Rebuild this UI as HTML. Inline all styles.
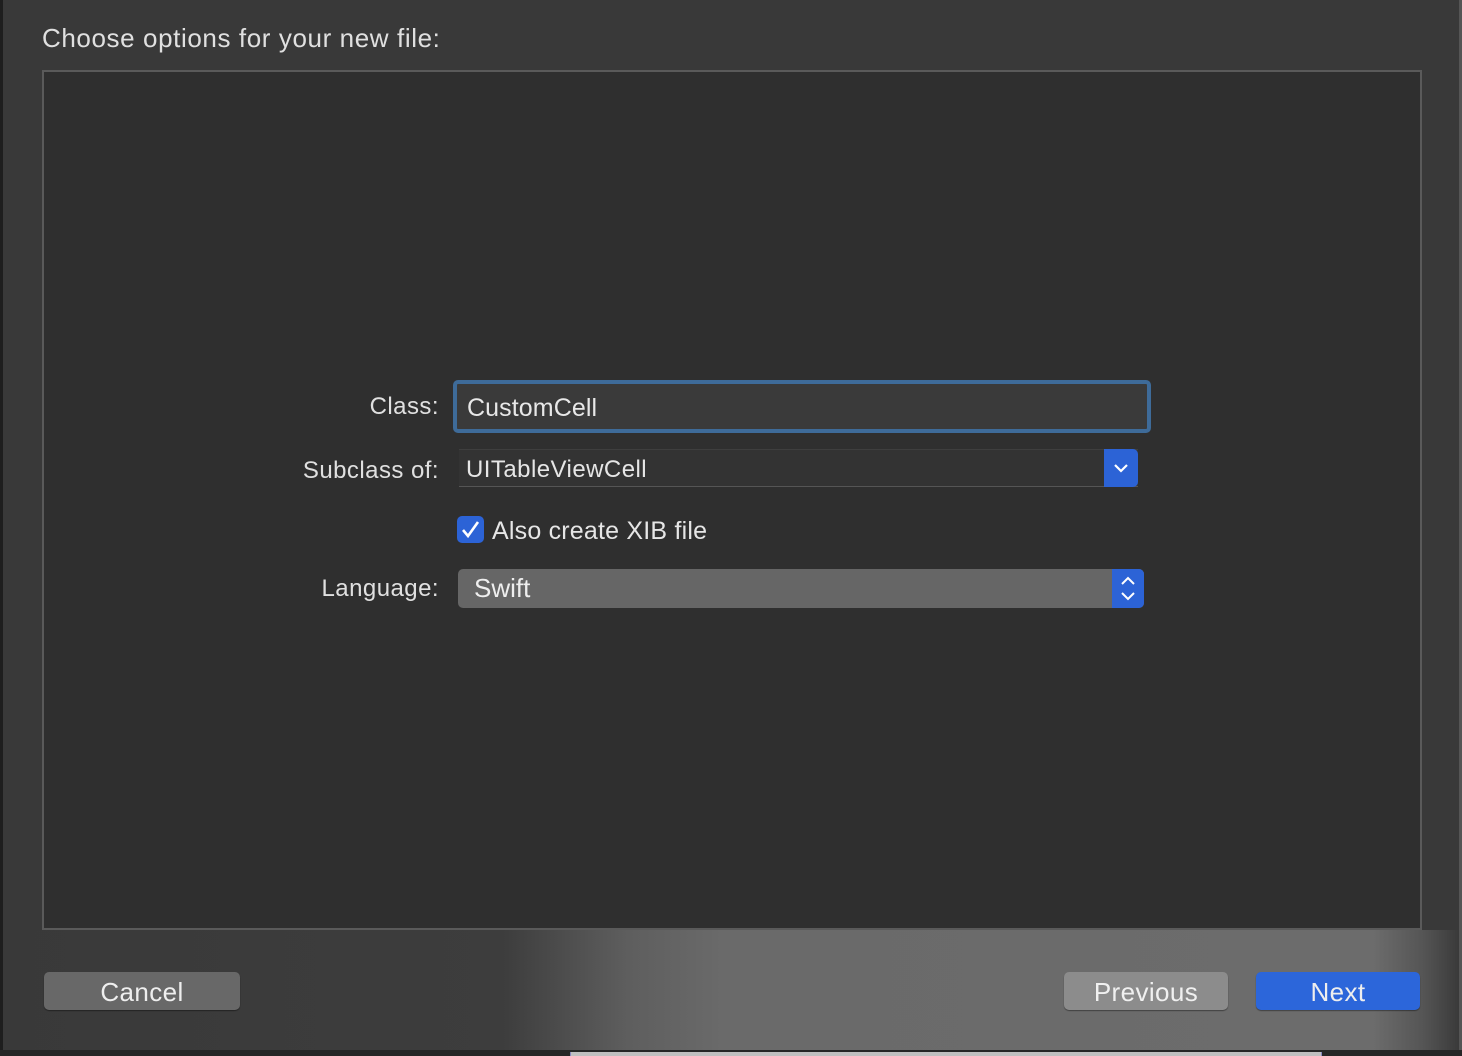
<!DOCTYPE html>
<html><head><meta charset="utf-8"><style>
*{margin:0;padding:0;box-sizing:border-box}
body{width:1462px;height:1056px;background:#222;position:relative;overflow:hidden;font-family:"Liberation Sans",sans-serif;color:#e6e6e6}
.dlg{position:absolute;left:3px;top:0;width:1456px;height:1050px;background:#393939}
.grad{position:absolute;left:3px;top:930px;width:1456px;height:120px;background:linear-gradient(90deg,#393939 0px,#3d3d3d 500px,#5e5e5e 625px,#6a6a6a 720px,#6c6c6c 1370px,#555 1420px,#3a3a3a 1456px)}
.rl{position:absolute;left:1459px;top:0;width:3px;height:1052px;background:#555}
.ll{position:absolute;left:0;top:0;width:3px;height:1052px;background:#1e1e1e}
.bot{position:absolute;left:0;top:1050px;width:1462px;height:6px;background:#262626}
.bot2{position:absolute;left:570px;top:1052px;width:752px;height:4px;background:#c0c0c0;border-left:1px solid #8888c0;border-right:1px solid #8888c0}
.title{position:absolute;left:42px;top:23px;font-size:26px;letter-spacing:0.6px;color:#e0e0e0}
.panel{position:absolute;left:42px;top:70px;width:1380px;height:860px;background:#2f2f2f;border:2px solid #5a5a5a}
.lab{position:absolute;right:1023px;font-size:24px;letter-spacing:0.45px;color:#e0e0e0;text-align:right;white-space:nowrap}
.inp{position:absolute;left:453px;top:380px;width:698px;height:53px;border:4px solid #3e6b99;border-radius:5px;background:#3a3a3a}
.inp span{position:absolute;left:10px;top:10px;font-size:25px;letter-spacing:0.1px;color:#e8e8e8}
.pop{position:absolute;left:459px;top:449px;width:679px;height:38px;background:#333;border-top:1px solid #3e3e3e;border-bottom:1px solid #555}
.pop span{position:absolute;left:7px;top:6px;font-size:24px;letter-spacing:0.45px}
.blue{position:absolute;background:#2c63d6;border-radius:0 5px 5px 0}
.cb{position:absolute;left:457px;top:516px;width:27px;height:27px;background:#2c63d6;border-radius:5px}
.lang{position:absolute;left:458px;top:569px;width:686px;height:39px;background:#666;border-radius:5px}
.lang span{position:absolute;left:16px;top:4px;font-size:26px;color:#eee}
.btn{position:absolute;top:972px;height:38px;border-radius:5px;font-size:26px;letter-spacing:0.4px;text-align:center;line-height:40px;color:#eee;box-shadow:0 1px 1px rgba(0,0,0,.4)}
</style></head><body>
<div class="dlg"></div><div class="grad"></div><div class="rl"></div><div class="ll"></div>
<div class="bot"></div><div class="bot2"></div>
<div class="title">Choose options for your new file:</div>
<div class="panel"></div>
<div class="lab" style="top:393px">Class:</div>
<div class="lab" style="top:457px">Subclass of:</div>
<div class="lab" style="top:575px">Language:</div>
<div class="inp"><span>CustomCell</span></div>
<div class="pop"><span>UITableViewCell</span></div>
<div class="blue" style="left:1104px;top:449px;width:34px;height:38px"><svg width="34" height="38"><path d="M11 16 L17 22 L23 16" stroke="#fff" stroke-width="2.2" fill="none"/></svg></div>
<div class="cb"><svg width="27" height="27"><path d="M6 14 L11 20 L21 6" stroke="#fff" stroke-width="2.6" fill="none"/></svg></div>
<div style="position:absolute;left:492px;top:517px;font-size:25px;letter-spacing:0.2px">Also create XIB file</div>
<div class="lang"><span>Swift</span></div>
<div class="blue" style="left:1112px;top:569px;width:32px;height:39px"><svg width="32" height="39"><path d="M10 15 L16 9 L22 15 M10 24 L16 30 L22 24" stroke="#fff" stroke-width="2" fill="none"/></svg></div>
<div class="btn" style="left:44px;width:196px;background:#686868">Cancel</div>
<div class="btn" style="left:1064px;width:164px;background:#8c8c8c;color:#f0f0f0">Previous</div>
<div class="btn" style="left:1256px;width:164px;background:#2c66da">Next</div>
</body></html>
